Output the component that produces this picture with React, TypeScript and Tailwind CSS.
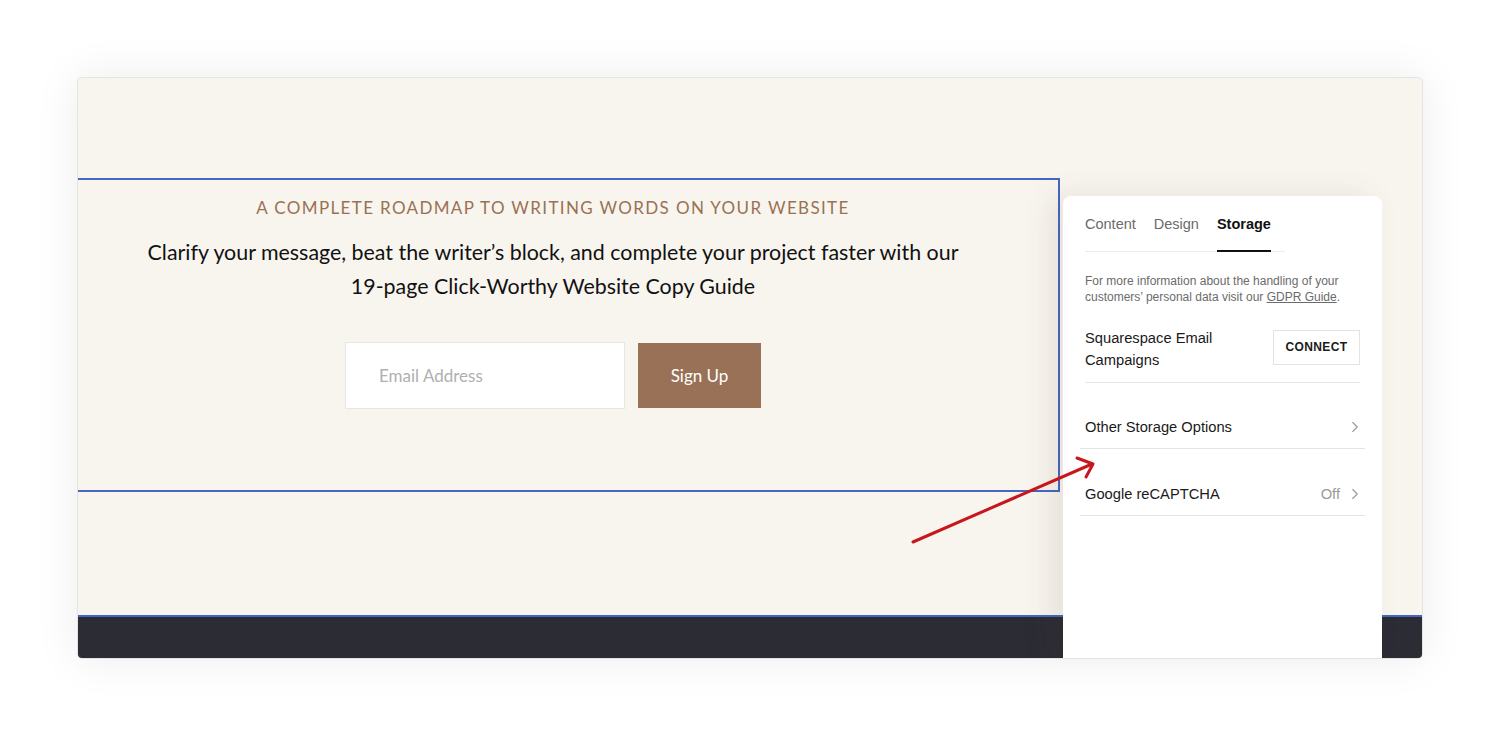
import { ChevronRight } from "lucide-react";

// Newsletter block preview with the Squarespace-style settings panel floating on top.

const panelFont = { fontFamily: '"Liberation Sans", Arial, sans-serif' };
const siteFont = { fontFamily: 'Lato, "Noto Sans", sans-serif' };

function SettingsPanel() {
  return (
    <div
      className="absolute left-[985px] top-[118px] bottom-0 w-[319px] rounded-t-lg bg-white shadow-[-12px_0_30px_rgba(80,60,30,0.10)]"
      style={panelFont}
    >
      {/* Tabs */}
      <div className="ml-[22px] mt-[18px] flex w-[200px] gap-[18px] border-b border-[#ececec] text-[14.5px]">
        <span className="pb-[15px] text-[#6b6b6b]">Content</span>
        <span className="pb-[15px] text-[#6b6b6b]">Design</span>
        <span className="-mb-px border-b-2 border-[#111] pb-[13px] font-bold text-[#111]">Storage</span>
      </div>

      <p className="mx-[22px] mt-[21px] text-[12px] leading-[16px] text-[#6b6b6b]">
        For more information about the handling of your customers&rsquo; personal data visit our{" "}
        <span className="underline">GDPR Guide</span>.
      </p>

      {/* Email campaigns row */}
      <div className="mx-[22px] mt-[22px] flex items-start justify-between border-b border-[#e8e8e8] pb-[11px]">
        <span className="text-[14.7px] leading-[22px] text-[#1a1a1a]">
          Squarespace Email
          <br />
          Campaigns
        </span>
        <button className="mt-[3px] h-[35px] w-[87px] border border-[#e3e3e3] text-[12px] font-bold tracking-[0.03em] text-[#1a1a1a]">
          CONNECT
        </button>
      </div>

      {/* Link rows */}
      <div className="mx-[17px]">
        <div className="flex h-[66px] items-center justify-between border-b border-[#e3e3e3] px-[5px] pt-[24px]">
          <span className="text-[14.7px] text-[#1a1a1a]">Other Storage Options</span>
          <ChevronRight size={18} strokeWidth={1.5} className="-mr-[4px] text-[#9a9a9a]" />
        </div>
        <div className="flex h-[67px] items-center justify-between border-b border-[#e3e3e3] px-[5px] pt-[24px]">
          <span className="text-[14.7px] text-[#1a1a1a]">Google reCAPTCHA</span>
          <span className="flex items-center gap-[6px]">
            <span className="text-[14.7px] text-[#9a9a9a]">Off</span>
            <ChevronRight size={18} strokeWidth={1.5} className="-mr-[4px] text-[#9a9a9a]" />
          </span>
        </div>
      </div>
    </div>
  );
}

export default function App() {
  return (
    <div className="relative h-[736px] w-[1500px] bg-white">
      <div className="absolute left-[77px] top-[77px] h-[582px] w-[1346px] overflow-hidden rounded-[5px] border border-[#e4e4e4] bg-[#f8f5ef] shadow-[0_0_45px_rgba(0,0,0,0.08)]">
        <div className="flex h-full flex-col pt-[100px]">
          {/* Newsletter block, selected (blue outline) */}
          <div className="h-[314px] w-[982px] border-2 border-l-0 border-[#4467c3] pr-[30px] pt-[16px] text-center" style={siteFont}>
            <h2 className="text-[17px] leading-[24px] tracking-[0.08em] text-[#9a7154]">
              A COMPLETE ROADMAP TO WRITING WORDS ON YOUR WEBSITE
            </h2>
            <p className="mx-auto mt-[15px] text-[21.4px] leading-[34px] text-[#111]">
              Clarify your message, beat the writer&rsquo;s block, and complete your project faster with our
              <br />
              19-page Click-Worthy Website Copy Guide
            </p>
            <div className="mt-[39px] flex justify-center gap-[13px]">
              <div className="flex h-[67px] w-[280px] items-center border border-[#e6e6e6] bg-white pl-[33px] text-[17px] text-[#b0b0b0]">
                Email Address
              </div>
              <div className="mt-px flex h-[65px] w-[123px] items-center justify-center bg-[#997157] text-[17px] text-white">
                Sign Up
              </div>
            </div>
          </div>

          <div className="flex-1" />

          {/* Footer strip */}
          <div className="h-[43px] border-t-2 border-[#4467c3] bg-[#2c2c35]" />
        </div>

        <SettingsPanel />
      </div>

      {/* Annotation arrow */}
      <svg className="pointer-events-none absolute left-0 top-0" width="1500" height="736" viewBox="0 0 1500 736">
        <g stroke="#c8161d" strokeWidth="3" strokeLinecap="round" strokeLinejoin="round" fill="none">
          <path d="M913 542 L1092 464" />
          <path d="M1077 458 L1093 464 L1086 477" />
        </g>
      </svg>
    </div>
  );
}
